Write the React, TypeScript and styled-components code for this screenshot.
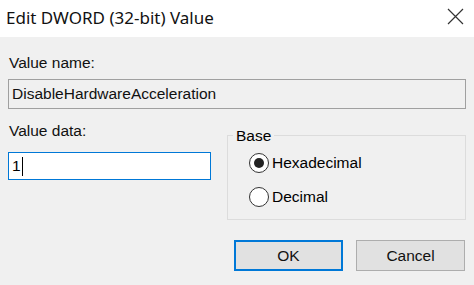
import React from 'react';
import styled, { createGlobalStyle } from 'styled-components';

const GlobalStyle = createGlobalStyle`
  html, body {
    margin: 0;
    padding: 0;
    background: #f0f0f0;
  }
  * {
    box-sizing: border-box;
  }
`;

export default function App() {
  return (
    <>
      <GlobalStyle />
      <StyledDialog>
        <StyledTitleBar>
          <StyledTitle>Edit DWORD (32-bit) Value</StyledTitle>
          <StyledClose>
            <svg width='17' height='17' viewBox='0 0 17 17'>
              <path d='M1 1L16 16M16 1L1 16' stroke='#333' strokeWidth='1.2' fill='none' />
            </svg>
          </StyledClose>
        </StyledTitleBar>
        <StyledBody>
          <StyledLabel>Value name:</StyledLabel>
          <StyledNameBox>DisableHardwareAcceleration</StyledNameBox>
          <StyledLabel $top={13}>Value data:</StyledLabel>
          <StyledDataRow>
            <StyledDataBox>
              1<StyledCaret />
            </StyledDataBox>
            <StyledGroup>
              <StyledLegend>Base</StyledLegend>
              <StyledRadioRow>
                <StyledRadio $checked />
                Hexadecimal
              </StyledRadioRow>
              <StyledRadioRow>
                <StyledRadio />
                Decimal
              </StyledRadioRow>
            </StyledGroup>
          </StyledDataRow>
          <StyledButtonRow>
            <StyledButton $primary>OK</StyledButton>
            <StyledButton>Cancel</StyledButton>
          </StyledButtonRow>
        </StyledBody>
      </StyledDialog>
    </>
  );
}

const StyledDialog = styled.div`
  width: 474px;
  height: 285px;
  background: #f0f0f0;
  display: flex;
  flex-direction: column;
  font-family: 'Liberation Sans', Arial, sans-serif;
  color: #000;
`;
const StyledTitleBar = styled.div`
  height: 37px;
  background: #fff;
  display: flex;
  align-items: center;
  justify-content: space-between;
  padding: 0 10px 0 6px;
`;
const StyledTitle = styled.div`
  font-family: 'Noto Sans', 'Open Sans', sans-serif;
  font-size: 17px;
  color: #111;
  padding-bottom: 2px;
`;
const StyledClose = styled.div`
  display: flex;
  padding-bottom: 4px;
`;
const StyledBody = styled.div`
  display: flex;
  flex-direction: column;
  padding: 0 8px;
`;
const StyledLabel = styled.div<{ $top?: number }>`
  font-size: 15.5px;
  line-height: 18px;
  margin-top: ${({ $top }) => $top ?? 17}px;
  margin-bottom: 7px;
  padding-left: 1px;
  color: #111;
`;
const StyledNameBox = styled.div`
  height: 30px;
  border: 1px solid #a0a0a0;
  background: #f0f0f0;
  font-size: 15.5px;
  display: flex;
  align-items: center;
  padding-left: 3px;
  color: #111;
`;
const StyledDataRow = styled.div`
  display: flex;
  align-items: flex-start;
  gap: 16px;
  margin-top: -12px;
`;
const StyledDataBox = styled.div`
  width: 203px;
  height: 28px;
  margin-top: 17px;
  border: 1px solid #0078d7;
  background: #fff;
  font-size: 15.5px;
  display: flex;
  align-items: center;
  padding-left: 3px;
`;
const StyledCaret = styled.span`
  width: 1px;
  height: 19px;
  background: #000;
  margin-left: 1px;
`;
const StyledGroup = styled.div`
  position: relative;
  flex: 1;
  height: 85px;
  border: 1px solid #dcdcdc;
  display: flex;
  flex-direction: column;
  gap: 14px;
  padding: 17px 0 0 21px;
`;
const StyledLegend = styled.div`
  position: absolute;
  top: -9px;
  left: 5px;
  padding: 0 3px;
  background: #f0f0f0;
  font-size: 15.5px;
  line-height: 18px;
`;
const StyledRadioRow = styled.div`
  display: flex;
  align-items: center;
  gap: 3px;
  font-size: 15.5px;
  line-height: 20px;
`;
const StyledRadio = styled.span<{ $checked?: boolean }>`
  width: 20px;
  height: 20px;
  border-radius: 50%;
  border: 1.5px solid #333;
  background: #fff;
  display: flex;
  align-items: center;
  justify-content: center;
  &::after {
    content: '';
    width: 10px;
    height: 10px;
    border-radius: 50%;
    background: ${({ $checked }) => ($checked ? '#222' : 'transparent')};
  }
`;
const StyledButtonRow = styled.div`
  display: flex;
  justify-content: flex-end;
  gap: 13px;
  margin-top: 20px;
  padding-right: 1px;
`;
const StyledButton = styled.div<{ $primary?: boolean }>`
  width: 109px;
  height: 31px;
  background: #e1e1e1;
  border: ${({ $primary }) => ($primary ? '2px solid #0078d7' : '1px solid #adadad')};
  display: flex;
  align-items: center;
  justify-content: center;
  font-size: 15.5px;
  color: #111;
`;
